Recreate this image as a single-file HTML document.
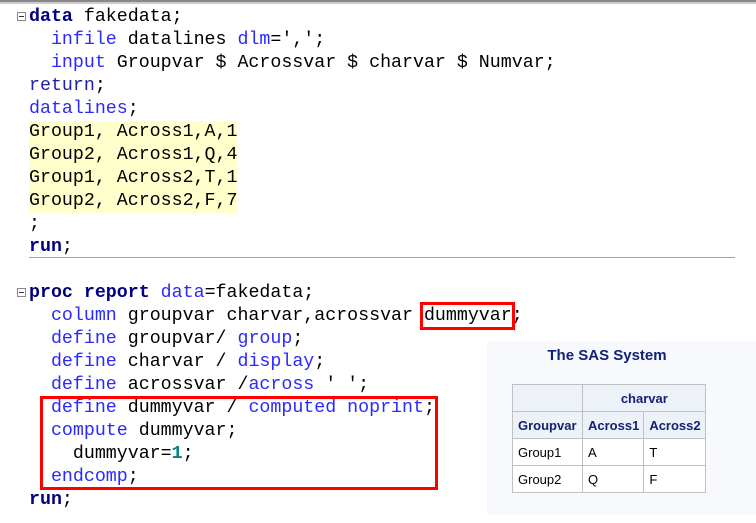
<!DOCTYPE html>
<html><head><style>
body{margin:0;width:756px;height:523px;background:#fff;position:relative;overflow:hidden;font-family:"Liberation Mono",monospace;}
.top{position:absolute;left:0;top:0;width:756px;height:2px;background:#888;}
.top2{position:absolute;left:0;top:2px;width:756px;height:2px;background:#ccc;}
.l{position:absolute;left:29px;margin-top:2px;height:23px;line-height:23px;font-size:18.3px;white-space:pre;color:#000;}
.k{color:#000080;font-weight:bold;}
.b{color:#2a2aff;}
.r{color:#2020a8;}
.n{color:#008080;font-weight:bold;}
.y{background:#ffffcc;}
.fold{position:absolute;left:17px;width:7px;height:7px;border:1px solid #888;background:#fff;}
.fold:after{content:"";position:absolute;left:1px;top:3px;width:5px;height:1px;background:#333;}
.sep{position:absolute;left:29px;top:257px;width:706px;height:1px;background:#a0a0a0;}
.box{position:absolute;border:3px solid #f00;}
.panel{position:absolute;left:487px;top:341px;width:269px;height:174px;background:#f8f9fc;font-family:"Liberation Sans",sans-serif;}
.title{position:absolute;left:0;width:240px;top:6px;text-align:center;font-weight:bold;font-size:15px;color:#112277;}
table{position:absolute;left:25px;top:43px;border-collapse:collapse;font-size:13px;}
td{border:1px solid #c1c1c1;height:26px;padding:0 4px 0 5px;background:#fff;color:#000;}
td.h{background:#edf2f9;color:#112277;font-weight:bold;}
</style></head><body>
<div class="top"></div><div class="top2"></div>
<div class="fold" style="top:12px"></div>
<div class="fold" style="top:288px"></div>
<div class="l" style="top:4px"><span class="k">data</span> fakedata;</div>
<div class="l" style="top:27px">  <span class="b">infile</span> datalines <span class="b">dlm</span>=',';</div>
<div class="l" style="top:50px">  <span class="b">input</span> Groupvar $ Acrossvar $ charvar $ Numvar;</div>
<div class="l" style="top:73px"><span class="r">return</span>;</div>
<div class="l" style="top:96px"><span class="b">datalines</span>;</div>
<div class="l y" style="top:119px">Group1, Across1,A,1</div>
<div class="l y" style="top:142px">Group2, Across1,Q,4</div>
<div class="l y" style="top:165px">Group1, Across2,T,1</div>
<div class="l y" style="top:188px">Group2, Across2,F,7</div>
<div class="l" style="top:211px">;</div>
<div class="l" style="top:234px"><span class="k">run</span>;</div>
<div class="sep"></div>
<div class="l" style="top:280px"><span class="k">proc report</span> <span class="b">data</span>=fakedata;</div>
<div class="l" style="top:303px">  <span class="b">column</span> groupvar charvar,acrossvar dummyvar;</div>
<div class="l" style="top:326px">  <span class="b">define</span> groupvar/ <span class="b">group</span>;</div>
<div class="l" style="top:349px">  <span class="b">define</span> charvar / <span class="b">display</span>;</div>
<div class="l" style="top:372px">  <span class="b">define</span> acrossvar /<span class="b">across</span> ' ';</div>
<div class="l" style="top:395px">  <span class="b">define</span> dummyvar / <span class="b">computed noprint</span>;</div>
<div class="l" style="top:418px">  <span class="b">compute</span> dummyvar;</div>
<div class="l" style="top:441px">    dummyvar=<span class="n">1</span>;</div>
<div class="l" style="top:464px">  <span class="b">endcomp</span>;</div>
<div class="l" style="top:487px"><span class="k">run</span>;</div>
<div class="box" style="left:420px;top:302px;width:89px;height:22px"></div>
<div class="box" style="left:40px;top:396px;width:392px;height:88px"></div>
<div class="panel">
<div class="title">The SAS System</div>
<table>
<tr><td class="h" style="width:60px"></td><td class="h" colspan="2" style="text-align:center">charvar</td></tr>
<tr><td class="h">Groupvar</td><td class="h" style="width:48px">Across1</td><td class="h" style="width:49px">Across2</td></tr>
<tr><td>Group1</td><td>A</td><td>T</td></tr>
<tr><td>Group2</td><td>Q</td><td>F</td></tr>
</table>
</div>
</body></html>
